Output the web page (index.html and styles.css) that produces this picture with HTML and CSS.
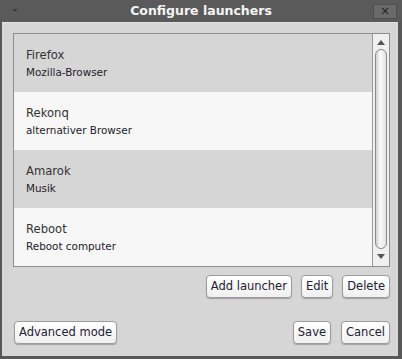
FILE: index.html
```html
<!DOCTYPE html>
<html>
<head>
<meta charset="utf-8">
<link rel="stylesheet" href="styles.css">
</head>
<body>
<div class="window">
  <div class="titlebar">
    <span class="menu-arrow"></span>
    <span class="title">Configure launchers</span>
    <span class="close">×</span>
  </div>
  <div class="content">
    <div class="listbox">
      <div class="rows">
        <div class="row dark">
          <div class="name">Firefox</div>
          <div class="desc">Mozilla-Browser</div>
        </div>
        <div class="row light">
          <div class="name">Rekonq</div>
          <div class="desc">alternativer Browser</div>
        </div>
        <div class="row dark">
          <div class="name">Amarok</div>
          <div class="desc">Musik</div>
        </div>
        <div class="row light">
          <div class="name">Reboot</div>
          <div class="desc">Reboot computer</div>
        </div>
      </div>
      <div class="scrollbar">
        <span class="arrow up"></span>
        <div class="thumb"></div>
        <span class="arrow down"></span>
      </div>
    </div>
    <div class="actions">
      <button class="btn">Add launcher</button>
      <button class="btn">Edit</button>
      <button class="btn">Delete</button>
    </div>
    <div class="footer">
      <button class="btn">Advanced mode</button>
      <div class="footer-right">
        <button class="btn">Save</button>
        <button class="btn">Cancel</button>
      </div>
    </div>
  </div>
</div>
</body>
</html>
```
FILE: styles.css
```css
html, body {
  margin: 0;
  padding: 0;
  background: #555555;
}
.window {
  width: 402px;
  height: 359px;
  display: flex;
  flex-direction: column;
  background: #575757;
  font-family: "DejaVu Sans", sans-serif;
}
.titlebar {
  height: 22px;
  flex: none;
  display: flex;
  align-items: center;
  position: relative;
  background: #5a5a5a;
}
.menu-arrow {
  position: absolute;
  left: 12px;
  top: 9px;
  width: 0;
  height: 0;
  border-left: 3px solid transparent;
  border-right: 3px solid transparent;
  border-top: 3px solid #3c3c3c;
}
.title {
  flex: 1;
  text-align: center;
  color: #f4f4f4;
  font-weight: bold;
  font-size: 12.5px;
  line-height: 22px;
}
.close {
  position: absolute;
  right: 5px;
  top: 4px;
  width: 24px;
  height: 15px;
  box-sizing: border-box;
  border: 1px solid #4e4e4e;
  background: #6a6a6a;
  color: #1e1e1e;
  font-size: 12px;
  line-height: 13px;
  text-align: center;
}
.content {
  flex: 1;
  margin: 0 4px 3px 2px;
  background: #d6d6d6;
  border-top: 1px solid #e2e2e2;
  padding: 10px 8px 12px 11px;
  display: flex;
  flex-direction: column;
}
.listbox {
  height: 232px;
  border: 1px solid #8e8e8e;
  display: flex;
  background: #f7f7f7;
}
.rows {
  flex: 1;
  display: flex;
  flex-direction: column;
}
.row {
  height: 58px;
  box-sizing: border-box;
  padding: 13px 0 0 12px;
}
.row.dark {
  background: #d6d6d6;
}
.row.light {
  background: #f7f7f7;
}
.name {
  font-size: 11.6px;
  line-height: 16px;
  color: #333333;
}
.desc {
  margin-top: 3px;
  font-size: 10.4px;
  line-height: 13px;
  color: #24202a;
}
.scrollbar {
  width: 16px;
  border-left: 1px solid #9a9a9a;
  background: #f0f0f0;
  display: flex;
  flex-direction: column;
  align-items: center;
}
.arrow {
  width: 0;
  height: 0;
  border-left: 4px solid transparent;
  border-right: 4px solid transparent;
  flex: none;
}
.arrow.up {
  margin-top: 6px;
  border-bottom: 5px solid #555555;
}
.arrow.down {
  margin-bottom: 7px;
  border-top: 5px solid #555555;
}
.thumb {
  flex: 1;
  width: 12px;
  margin: 4px 0 5px;
  box-sizing: border-box;
  border: 1px solid #8a8a8a;
  border-radius: 6px;
  background: linear-gradient(to right, #cfcfcf, #fafafa 40%, #e2e2e2);
}
.actions {
  margin-top: 8px;
  display: flex;
  justify-content: flex-end;
  gap: 9px;
  padding-right: 0;
}
.footer {
  margin-top: auto;
  display: flex;
  justify-content: space-between;
  align-items: center;
  padding-left: 1px;
  padding-right: 0;
}
.footer-right {
  display: flex;
  gap: 10px;
}
.btn {
  height: 23px;
  padding: 0 4px;
  border: 1px solid #9c9c9c;
  border-radius: 4px;
  background: linear-gradient(#ffffff, #f0f0f0);
  box-shadow: 0 1px 1px rgba(0, 0, 0, 0.25);
  font-family: "DejaVu Sans", sans-serif;
  font-size: 11.5px;
  color: #222034;
  line-height: 21px;
}
```
